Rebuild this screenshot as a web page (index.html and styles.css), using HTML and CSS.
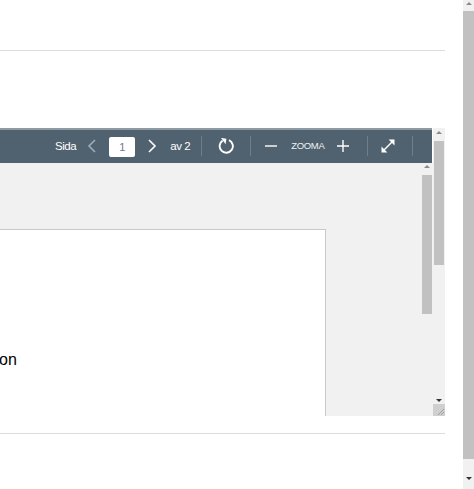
FILE: index.html
```html
<!DOCTYPE html>
<html lang="sv">
<head>
<meta charset="utf-8">
<title>Dokument</title>
<link rel="stylesheet" href="styles.css">
</head>
<body>
<div class="page">
  <main class="content">
    <hr class="rule rule-top">
    <section class="viewer">
      <div class="viewer-main">
        <div class="toolbar">
          <span class="label">Sida</span>
          <button class="tool tool-prev" aria-label="Föregående"><svg width="10" height="14" viewBox="0 0 10 14"><path d="M8 1 2 7l6 6" fill="none" stroke="#9fadb8" stroke-width="1.6"/></svg></button>
          <span class="page-input">1</span>
          <button class="tool tool-next" aria-label="Nästa"><svg width="10" height="14" viewBox="0 0 10 14"><path d="M2 1l6 6-6 6" fill="none" stroke="#fff" stroke-width="1.6"/></svg></button>
          <span class="label label-of">av 2</span>
          <i class="sep sep-a"></i>
          <button class="tool tool-rotate" aria-label="Rotera"><svg width="16" height="16" viewBox="0 0 16 16"><path d="M4.6 2.6A6.6 6.6 0 1 0 11 2.1" fill="none" stroke="#fff" stroke-width="1.9"/><path d="M2.6 .2h5.4v5.6z" fill="#fff" transform="rotate(8 5 3)"/></svg></button>
          <i class="sep sep-b"></i>
          <button class="tool tool-minus" aria-label="Zooma ut"><svg width="12" height="12" viewBox="0 0 12 12"><path d="M0 6h12" stroke="#fff" stroke-width="1.4"/></svg></button>
          <span class="label-zoom">ZOOMA</span>
          <button class="tool tool-plus" aria-label="Zooma in"><svg width="12" height="12" viewBox="0 0 12 12"><path d="M0 6h12M6 0v12" stroke="#fff" stroke-width="1.4"/></svg></button>
          <i class="sep sep-c"></i>
          <button class="tool tool-full" aria-label="Helskärm"><svg width="14" height="14" viewBox="0 0 14 14"><path d="M2 12 12 2" stroke="#fff" stroke-width="1.5"/><path d="M7.6 .5h5.9v5.9zM6.4 13.5H.5V7.6z" fill="#fff"/></svg></button>
          <i class="sep sep-d"></i>
        </div>
        <div class="canvas">
          <div class="sheet"><span class="sheet-text">on</span></div>
          <div class="scrollbar inner-bar">
            <span class="arrow up"></span>
            <span class="thumb"></span>
          </div>
        </div>
      </div>
      <div class="scrollbar outer-bar">
        <span class="arrow up"></span>
        <span class="thumb"></span>
        <span class="spacer"></span>
        <span class="arrow down"></span>
        <span class="grip"><svg width="12" height="12" viewBox="0 0 12 12"><path d="M11 5 5 11M11 8l-3 3" fill="none" stroke="#8f8f8f" stroke-width=".8"/></svg></span>
      </div>
    </section>
    <hr class="rule rule-bottom">
  </main>
  <div class="scrollbar window-bar">
    <span class="arrow up"></span>
    <span class="thumb"></span>
    <span class="arrow down"></span>
  </div>
</div>
</body>
</html>
```

FILE: styles.css
```css
* { box-sizing: border-box; }
html, body { margin: 0; height: 100%; background: #fff; overflow: hidden; }
body { font-family: "Liberation Sans", Arial, sans-serif; }
.page { display: flex; height: 489px; width: 474px; }
.content { width: 445px; flex: none; }
.rule { margin: 0; border: 0; height: 1px; background: #dcdcdc; }
.rule-top { margin-top: 50px; }
.rule-bottom { margin-top: 17px; }
.viewer { display: flex; height: 288px; margin-top: 77px; }
.viewer-main { width: 433px; display: flex; flex-direction: column; }
.toolbar { height: 35px; flex: none; display: flex; align-items: center; background: #506170; border-top: 2px solid #8e9aa4; padding: 0 0 2px 55px; margin-right: 1px; color: #fff; }
.label { font-size: 11.5px; letter-spacing: -.45px; color: #fff; }
.tool { appearance: none; border: 0; background: none; padding: 0; display: flex; align-items: center; justify-content: center; }
.tool-prev { margin-left: 11px; }
.page-input { width: 26px; height: 20px; margin: 2px 0 0 12px; background: #fff; border-radius: 2px; color: #6b7883; font-size: 11px; line-height: 20px; text-align: center; }
.tool-next { margin-left: 12px; }
.label-of { margin-left: 13px; }
.sep { width: 1px; height: 20px; background: #6e7f8c; flex: none; }
.sep-a { margin-left: 11px; }
.tool-rotate { margin-left: 16px; }
.sep-b { margin-left: 16px; }
.tool-minus { margin-left: 14px; }
.label-zoom { font-size: 9.5px; letter-spacing: -.3px; margin-left: 14px; color: #eef1f3; }
.tool-plus { margin-left: 12px; }
.sep-c { margin-left: 18px; }
.tool-full { margin-left: 13px; }
.sep-d { margin-left: 17px; }
.canvas { flex: 1; display: flex; background: #f1f1f1; min-height: 0; }
.sheet { flex: 1; margin: 66px 95px 0 0; background: #fff; border-top: 1px solid #c9c9c9; border-right: 1px solid #c9c9c9; display: flex; align-items: flex-start; padding-top: 121px; }
.sheet-text { font-size: 16px; line-height: 18px; color: #000; margin-left: -1px; }
.scrollbar { display: flex; flex-direction: column; flex: none; width: 12px; background: #f1f1f1; }
.inner-bar { height: 253px; }
.inner-bar .thumb { margin-top: 1px; height: 139px; }
.outer-bar { height: 288px; }
.outer-bar .arrow.up { height: 13px; }
.outer-bar .arrow.up::before { top: 3px; }
.outer-bar .thumb { height: 124px; }
.spacer { flex: 1; }
.grip { display: block; flex: none; height: 12px; background: #cfcfcf; }
.grip svg { display: block; }
.window-bar { margin-left: 18px; width: 11px; height: 489px; }
.window-bar .thumb { height: 448px; margin: 0; }
.window-bar .arrow.down { margin-top: 12px; }
.thumb { display: block; flex: none; margin: 0 1px; background: #c1c1c1; }
.arrow { display: block; flex: none; height: 11px; position: relative; }
.arrow::before { content: ""; position: absolute; left: 3px; border: 3px solid transparent; }
.arrow.up::before { top: 2px; border-top-width: 0; border-bottom: 3px solid #8a8a8a; }
.arrow.down::before { bottom: 2px; border-bottom-width: 0; border-top: 3px solid #333; }
```
